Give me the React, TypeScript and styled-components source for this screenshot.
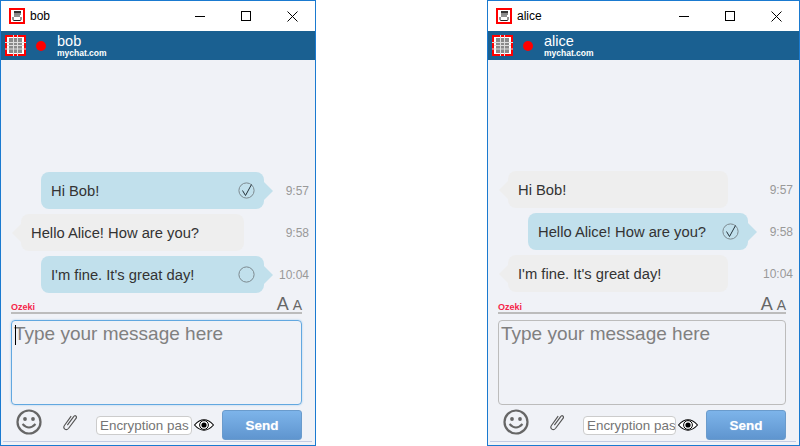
import * as React from 'react';
import styled, { createGlobalStyle } from 'styled-components';

const GlobalStyle = createGlobalStyle`
  html, body {
    margin: 0;
    padding: 0;
    background: #fff;
    font-family: "Liberation Sans", Arial, sans-serif;
    overflow: hidden;
  }
`;

type Message = { text: string; time: string; from: 'bob' | 'alice'; seen: boolean };

const messages: Message[] = [
  { text: 'Hi Bob!', time: '9:57', from: 'bob', seen: true },
  { text: 'Hello Alice! How are you?', time: '9:58', from: 'alice', seen: true },
  { text: "I'm fine. It's great day!", time: '10:04', from: 'bob', seen: false },
];

const AppIcon = () => (
  <svg width="16" height="16" viewBox="0 0 16 16">
    <rect x="1" y="1" width="14" height="14" fill="#fff" stroke="#f00" strokeWidth="2" />
    <rect x="5" y="3" width="7" height="2" fill="#333" />
    <rect x="5" y="5" width="7" height="2" fill="#888" />
    <path d="M5 8 H11 M4 9 V11.5 Q4 12.5 5 12.5 H11 Q12 12.5 12 11.5 V9" fill="none" stroke="#222" strokeWidth="1" />
  </svg>
);

const GridIcon = () => (
  <svg width="21" height="21" viewBox="0 0 21 21">
    <rect x="1" y="1" width="19" height="19" fill="#fff" stroke="#f00" strokeWidth="2" />
    <rect x="4" y="3" width="13" height="15" fill="#8a8a8a" />
    <path d="M8.5 0 V21 M12.5 0 V21 M0 7.5 H21 M2 10.5 H19 M0 14 H21" stroke="#ddd" strokeWidth="1" />
  </svg>
);

const MinimizeIcon = () => (
  <svg width="10" height="10" viewBox="0 0 10 10">
    <path d="M0 5.5 H10" stroke="#000" strokeWidth="1" />
  </svg>
);

const MaximizeIcon = () => (
  <svg width="10" height="10" viewBox="0 0 10 10">
    <rect x="0.5" y="0.5" width="9" height="9" fill="none" stroke="#000" />
  </svg>
);

const CloseIcon = () => (
  <svg width="11" height="11" viewBox="0 0 11 11">
    <path d="M0.5 0.5 L10.5 10.5 M10.5 0.5 L0.5 10.5" stroke="#000" strokeWidth="1" />
  </svg>
);

const StatusIcon = ({ seen }: { seen: boolean }) => (
  <svg width="17" height="17" viewBox="0 0 17 17">
    <circle cx="8.5" cy="8.5" r="7.6" fill="none" stroke="#7d8a90" strokeWidth="1" />
    {seen && <path d="M4.5 8.5 L7.5 13.5 L13.5 2.5" fill="none" stroke="#26343c" strokeWidth="1" />}
  </svg>
);

const SmileyIcon = () => (
  <svg width="26" height="26" viewBox="0 0 26 26">
    <circle cx="13" cy="13" r="11.5" fill="none" stroke="#666" strokeWidth="2.2" />
    <circle cx="9" cy="10" r="1.9" fill="#666" />
    <circle cx="17" cy="10" r="1.9" fill="#666" />
    <path d="M6.5 15 Q13 22 19.5 15" fill="none" stroke="#666" strokeWidth="2" />
  </svg>
);

const ClipIcon = () => (
  <svg width="16" height="18" viewBox="0 0 15 17">
    <path
      d="M5 11.5 L10.8 3.6 Q12 2 13 2.8 Q14.2 3.8 13 5.4 L6.2 14.4 Q4.4 16.6 2.6 15.2 Q0.8 13.8 2.4 11.6 L8.6 3"
      fill="none"
      stroke="#555"
      strokeWidth="1.1"
    />
  </svg>
);

const EyeIcon = () => (
  <svg width="20" height="14" viewBox="0 0 20 14">
    <path d="M0.5 7 Q10 -3.5 19.5 7 Q10 17.5 0.5 7 Z" fill="#fff" stroke="#000" strokeWidth="1.1" />
    <circle cx="10" cy="7" r="4.4" fill="none" stroke="#000" strokeWidth="1" />
    <circle cx="10" cy="7" r="2.6" fill="#000" />
  </svg>
);

const ChatWindow = ({ user, side }: { user: string; side: 'bob' | 'alice' }) => {
  const focused = side === 'bob';
  return (
    <Frame $width={focused ? 316 : 313}>
      <TitleBar>
        <TitleLeft>
          <AppIcon />
          <TitleText>{user}</TitleText>
        </TitleLeft>
        <WindowButtons>
          <WindowButton><MinimizeIcon /></WindowButton>
          <WindowButton><MaximizeIcon /></WindowButton>
          <WindowButton><CloseIcon /></WindowButton>
        </WindowButtons>
      </TitleBar>

      <Header>
        <GridIcon />
        <StatusDot />
        <HeaderText>
          <UserName>{user}</UserName>
          <Domain>mychat.com</Domain>
        </HeaderText>
      </Header>

      <MessageList $nudge={focused ? 0 : 1}>
        {messages.map((m) => {
          const mine = m.from === side;
          return (
            <MessageRow key={m.time}>
              <Bubble $mine={mine}>
                <span>{m.text}</span>
                {mine && <StatusIcon seen={m.seen} />}
              </Bubble>
              <Time>{m.time}</Time>
            </MessageRow>
          );
        })}
      </MessageList>

      <Composer>
        <ComposerTop>
          <Brand>Ozeki</Brand>
          <FontSizes>
            <BigA>A</BigA>
            <SmallA>A</SmallA>
          </FontSizes>
        </ComposerTop>
        <Rule />
        <InputBox $focused={focused}>
          {focused && <Caret />}
          <Placeholder>Type your message here</Placeholder>
        </InputBox>
        <Footer>
          <SmileyWrap><SmileyIcon /></SmileyWrap>
          <ClipWrap><ClipIcon /></ClipWrap>
          <PasswordBox>
            <PasswordText>Encryption pas</PasswordText>
          </PasswordBox>
          <EyeWrap><EyeIcon /></EyeWrap>
          <SendButton>Send</SendButton>
        </Footer>
      </Composer>
      <BottomLine />
    </Frame>
  );
};

const App: React.FC = () => {
  return (
    <>
      <GlobalStyle />
      <Desktop>
        <ChatWindow user="bob" side="bob" />
        <ChatWindow user="alice" side="alice" />
      </Desktop>
    </>
  );
};

const Desktop = styled.div`
  width: 800px;
  height: 446px;
  display: flex;
  justify-content: space-between;
  background: #fff;
`;

const Frame = styled.div<{ $width: number }>`
  width: ${({ $width }) => $width}px;
  height: 446px;
  box-sizing: border-box;
  border: 1px solid #1a7ad0;
  display: flex;
  flex-direction: column;
  background: #f0f2f7;
`;

const TitleBar = styled.div`
  height: 30px;
  flex: none;
  background: #fff;
  display: flex;
  align-items: center;
  justify-content: space-between;
`;

const TitleLeft = styled.div`
  display: flex;
  align-items: center;
  gap: 5px;
  padding-left: 8px;
`;

const TitleText = styled.span`
  font-size: 12px;
  color: #000;
`;

const WindowButtons = styled.div`
  display: flex;
`;

const WindowButton = styled.div`
  width: 46px;
  height: 30px;
  display: flex;
  align-items: center;
  justify-content: center;
`;

const Header = styled.div`
  height: 29px;
  flex: none;
  background: #1a6091;
  display: flex;
  align-items: center;
  padding-left: 4px;
`;

const StatusDot = styled.div`
  width: 10px;
  height: 10px;
  border-radius: 50%;
  background: #f00;
  margin-left: 10px;
`;

const HeaderText = styled.div`
  margin-left: 11px;
  display: flex;
  flex-direction: column;
  color: #fff;
`;

const UserName = styled.span`
  font-size: 14.5px;
  line-height: 15px;
`;

const Domain = styled.span`
  font-size: 8.5px;
  line-height: 9px;
  font-weight: bold;
`;

const MessageList = styled.div<{ $nudge: number }>`
  flex: 1;
  display: flex;
  flex-direction: column;
  justify-content: flex-end;
  gap: 5px;
  padding-bottom: ${({ $nudge }) => $nudge}px;
`;

const MessageRow = styled.div`
  display: grid;
  grid-template-columns: 1fr 51px;
  height: 37px;
`;

const Bubble = styled.div<{ $mine: boolean }>`
  position: relative;
  margin-left: ${({ $mine }) => ($mine ? 40 : 20)}px;
  margin-right: ${({ $mine }) => ($mine ? 0 : 20)}px;
  padding: 0 9px 0 10px;
  border-radius: 8px;
  background: ${({ $mine }) => ($mine ? '#c1e0ec' : '#eeeeee')};
  display: flex;
  align-items: center;
  justify-content: space-between;
  font-size: 14.75px;
  color: #333;

  &::after {
    content: '';
    position: absolute;
    top: 10px;
    ${({ $mine }) => ($mine ? 'right: -9px;' : 'left: -9px;')}
    border-top: 9px solid transparent;
    border-bottom: 9px solid transparent;
    ${({ $mine }) =>
      $mine ? 'border-left: 9px solid #c1e0ec;' : 'border-right: 9px solid #eeeeee;'}
  }
`;

const Time = styled.div`
  font-size: 12px;
  color: #999;
  text-align: right;
  padding-right: 6px;
  align-self: center;
`;

const Composer = styled.div`
  flex: none;
  padding: 0 13px 0 10px;
  display: flex;
  flex-direction: column;
`;

const ComposerTop = styled.div`
  height: 19px;
  display: flex;
  align-items: flex-end;
  justify-content: space-between;
`;

const Brand = styled.span`
  font-size: 9px;
  font-weight: bold;
  color: #f5254a;
  line-height: 9px;
`;

const FontSizes = styled.div`
  display: flex;
  align-items: baseline;
  gap: 4px;
  color: #666;
  line-height: 14px;
`;

const BigA = styled.span`
  font-size: 18px;
`;

const SmallA = styled.span`
  font-size: 14px;
`;

const Rule = styled.div`
  height: 2px;
  background: #bcbcbc;
`;

const InputBox = styled.div<{ $focused: boolean }>`
  position: relative;
  height: 85px;
  margin-top: 6px;
  box-sizing: border-box;
  border: 1px solid ${({ $focused }) => ($focused ? '#62a8e0' : '#bcbcbc')};
  border-radius: 4px;
  padding: 2px 2px;
  ${({ $focused }) => $focused && 'box-shadow: 0 0 2px #9cc8ec;'}
`;

const Caret = styled.div`
  position: absolute;
  left: 3px;
  top: 4px;
  width: 1px;
  height: 20px;
  background: #000;
`;

const Placeholder = styled.span`
  font-size: 19px;
  line-height: 22px;
  color: #808080;
`;

const Footer = styled.div`
  height: 36px;
  display: flex;
  align-items: flex-start;
`;

const SmileyWrap = styled.div`
  flex: none;
  margin: 4px 0 0 5px;
  height: 26px;
`;

const ClipWrap = styled.div`
  flex: none;
  margin: 8px 0 0 20px;
  height: 18px;
`;

const PasswordBox = styled.div`
  flex: 1;
  min-width: 0;
  height: 19px;
  margin: 11px 0 0 18px;
  box-sizing: border-box;
  background: #fff;
  border: 1px solid #ccc;
  border-radius: 4px;
  overflow: hidden;
  padding-left: 3px;
  display: flex;
  align-items: center;
`;

const PasswordText = styled.span`
  font-size: 13.4px;
  color: #757575;
  white-space: nowrap;
`;

const EyeWrap = styled.div`
  flex: none;
  margin: 13px 0 0 2px;
  height: 14px;
`;

const SendButton = styled.div`
  flex: none;
  width: 80px;
  height: 30px;
  margin: 5px 0 0 8px;
  box-sizing: border-box;
  border: 1px solid #6a9bcc;
  border-radius: 3px;
  background: linear-gradient(#7db4ea, #5f95cf);
  color: #fff;
  font-size: 13.5px;
  font-weight: bold;
  text-shadow: 0 0 1px rgba(255, 255, 255, 0.5);
  display: flex;
  align-items: center;
  justify-content: center;
`;

const BottomLine = styled.div`
  height: 1px;
  margin: 0 3px 3px 2px;
  background: #c3cbe3;
  flex: none;
`;

export default App;
